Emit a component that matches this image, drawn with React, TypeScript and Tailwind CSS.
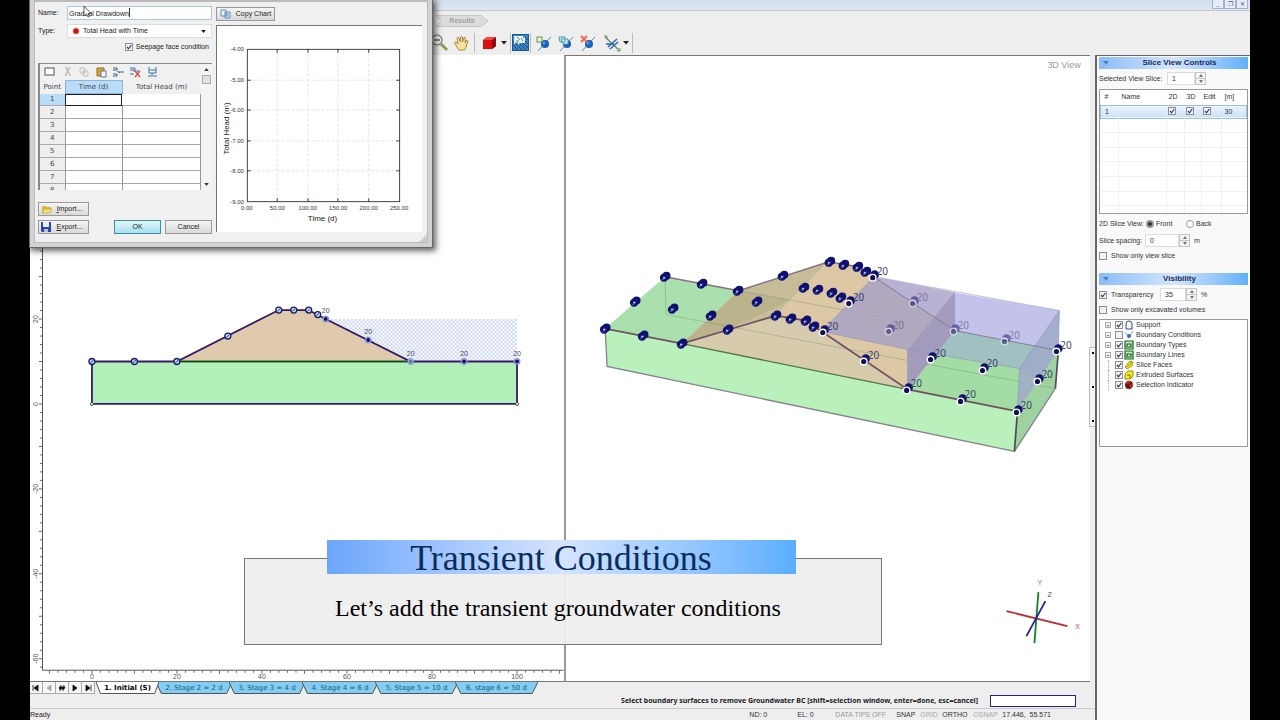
import type { ReactNode } from 'react';

const App = () => {
  return (
    <div className="h-screen bg-black px-[30px] font-['Liberation_Sans',Arial,sans-serif] text-[7px] leading-[10px] text-[#222] overflow-hidden">
      <div className="relative flex h-full flex-col bg-[#eeeeee]">
        <TitleBar />
        <WorkflowBar />
        <Toolbar />
        <div className="flex min-h-0 flex-1">
          <main className="relative flex min-w-0 flex-1 flex-col">
            <div className="flex min-h-0 flex-1">
              <section aria-label="2D view" className="min-w-0 flex-[534] border-b border-[#777] bg-white">
                <SectionView />
              </section>
              <section aria-label="3D view" className="mr-[5px] min-w-0 flex-[525] border-y border-l-2 border-[#777] border-l-[#999] bg-white">
                <ModelView />
              </section>
            </div>
            <StageTabs />
            <CommandLine />
            <StatusBar />
            <Banner />
            <div className="absolute right-0 top-[292px] flex h-20 w-[6px] flex-col items-center justify-between border border-r-0 border-[#bbb] bg-[#f4f4f4] py-1">
              <i className="size-[2px] bg-black" />
              <i className="size-[2px] bg-black" />
              <i className="size-[2px] bg-black" />
            </div>
          </main>
          <SidePanel />
        </div>
        <BoundaryDialog />
      </div>
    </div>
  );
};

const TitleBar = () => (
  <header className="flex h-[11px] shrink-0 justify-end border-b border-[#c2c8d0] bg-gradient-to-b from-[#d3dfee] to-[#dfe6f0] pr-[2px]">
    {['_', '❐', '✕'].map((glyph) => (
      <button key={glyph} className="flex h-[9px] w-3 items-center justify-center border border-t-0 border-[#9fb4cc] bg-[#e4edf7] text-[6px] leading-none text-[#556]">
        {glyph}
      </button>
    ))}
  </header>
);

const WorkflowBar = () => (
  <nav className="flex h-5 shrink-0 items-center pl-[405px]">
    <button className="relative h-3 w-[54px]">
      <svg viewBox="0 0 54 12" className="absolute inset-0">
        <path d="M1 .5H46L53 6L46 11.5H1L6 6Z" fill="#dcdcdc" stroke="#c6c6c6" />
      </svg>
      <span className="relative font-bold text-[#a2a2a2]">Results</span>
    </button>
  </nav>
);

const Separator = () => <i className="h-5 w-px shrink-0 bg-[#bbb]" />;

const Toolbar = () => (
  <div className="flex h-6 shrink-0 items-center pb-px pl-[401px]">
    <button aria-label="Zoom out" className="mr-1 size-[18px]">
      <svg viewBox="0 0 18 18">
        <path d="M10 10L16 16" stroke="#8d9c55" strokeWidth="3" />
        <circle cx="6" cy="6" r="5" fill="#eef2ee" stroke="#888" strokeWidth="1.5" />
        <path d="M3 6h6" stroke="#666" strokeWidth="1.5" />
      </svg>
    </button>
    <button aria-label="Pan" className="mr-[3px] size-[18px]">
      <svg viewBox="0 0 18 18">
        <path d="M5 15L2 9.5Q1 7.500 3 8L5 10L4 4Q4.500 2.500 6 4L7.500 8V3Q8.500 1.500 9.500 3V8L11 3.500Q12.500 3 12.500 5L12 9L13.500 6.500Q15 6 14.700 8L13 13L11.500 16H6Z" fill="#f8dfa0" stroke="#a98a45" />
      </svg>
    </button>
    <Separator />
    <button aria-label="View solid" className="ml-[5px] mr-[3px] size-[18px]">
      <svg viewBox="0 0 18 18">
        <path d="M3 6L7 3H16V12L12 15H3Z" fill="#d80f12" />
        <path d="M3 6L7 3H16L12 6Z" fill="#f0494a" />
        <path d="M12 6L16 3V12L12 15Z" fill="#960809" />
      </svg>
    </button>
    <DropArrow />
    <i className="w-[3px]" />
    <Separator />
    <button aria-label="Show groundwater" className="mx-px size-[17px] border border-[#1c568f] bg-[#3b83c4]">
      <svg viewBox="0 0 15 15">
        <path d="M0 10l5 5M0 6l9 9M4 6l9 9M8 6l7 7M10 4l5 5M12 2l3 3" stroke="#164d87" />
        <path d="M1 1h9v2l2-1v6H7L5 10V7L1 9Z" fill="#e2f0f3" />
        <path d="M4 2l3 3M8 3l2 3M3 6h3" stroke="#498" />
      </svg>
    </button>
    <Separator />
    <button aria-label="Add boundary condition" className="ml-1 size-[18px]">
      <SurfaceIcon><rect x="2" y="3" width="5" height="5" fill="#eef7dc" stroke="#68913d" /></SurfaceIcon>
    </button>
    <button aria-label="Edit boundary condition" className="ml-1 size-[18px]">
      <SurfaceIcon><path d="M2 3h6v5H3zM4 5h7v5H6z" fill="#d8f1f2" stroke="#4c9aa5" /></SurfaceIcon>
    </button>
    <button aria-label="Remove boundary condition" className="ml-1 size-[18px]">
      <SurfaceIcon><path d="M2 2l6 6M8 2L2 8" stroke="#ee6b50" strokeWidth="2" /></SurfaceIcon>
    </button>
    <button aria-label="Discharge section" className="ml-[6px] mr-[2px] size-[18px]">
      <svg viewBox="0 0 18 18">
        <path d="M2 3L16 16" stroke="#688c6c" strokeWidth="1.500" />
        <path d="M5 13L14 5M7 15L15 8M3 10l8 0" stroke="#2a67ad" strokeWidth="1.500" />
        <path d="M1 2h3v3M14 17h3v-3" fill="none" stroke="#649b45" />
      </svg>
    </button>
    <DropArrow />
    <i className="w-[3px]" />
    <Separator />
  </div>
);

const SurfaceIcon = ({ children }: { children: ReactNode }) => (
  <svg viewBox="0 0 18 18">
    <path d="M3 17L16 3" stroke="#6d87a0" />
    <circle cx="10" cy="10" r="4" fill="#1861bd" />
    <circle cx="9" cy="9" r="1.500" fill="#5d9ce2" />
    {children}
  </svg>
);

const DropArrow = () => (
  <svg viewBox="0 0 6 4" className="h-1 w-[6px] shrink-0">
    <path d="M0 0h6L3 3.500Z" fill="#222" />
  </svg>
);

// 2D section. Model units: x = 92 + 4.255 u, y = 404 - 4.25 u
const SectionView = () => (
  <svg viewBox="30 55 534 626" className="block size-full">
    <defs>
      <pattern id="water" width="4" height="4" patternUnits="userSpaceOnUse">
        <path d="M0 0L4 4M4 0L0 4" stroke="#b3c3f3" strokeWidth=".7" />
      </pattern>
    </defs>
    <path d="M42.500 55V670.500H564" fill="none" stroke="#555" />
    {Array.from({ length: 75 }, (_, i) => 654.700 - (i - 1) * 8.5 + 4.3).map((y, i) => (
      <path key={y} d={`M${i % 5 === 1 ? 39 : 40} ${y}H42`} stroke="#666" />
    ))}
    {Array.from({ length: 61 }, (_, i) => 49.450 + i * 8.51).map((x, i) => (
      <path key={x} d={`M${x} 671V${i % 5 === 0 ? 674 : 673}`} stroke="#666" />
    ))}
    <g fontSize="7" fill="#555" textAnchor="middle">
      {xLabels.map((u) => (
        <text key={u} x={92 + u * 4.255} y="679">{u}</text>
      ))}
      {yLabels.map((u) => (
        <text key={u} transform={`translate(38 ${404 - u * 4.25}) rotate(-90)`}>{u}</text>
      ))}
    </g>
    <path d="M326 319H517.500V361H411Z" fill="url(#water)" />
    <path d="M92 361.500H517.500V404H92Z" fill="#b3efb8" />
    <path d="M177 361.500L279 310H309L318 315L411 361.500Z" fill="#dfcaad" />
    <path d="M177 361.500H411" stroke="#0f5a16" strokeWidth="1.500" />
    <path d="M92 361.500H177L279 310H309L318 315L411 361.500H517.500V404H92Z" fill="none" stroke="#361a68" strokeWidth="1.800" />
    <path d="M177 361.500H411" stroke="#0f4a16" strokeWidth="1.500" />
    {sectionNodes.map(([x, y]) => (
      <g key={x}>
        <circle cx={x} cy={y} r="3" fill="#c6d4f5" stroke="#151d6d" strokeWidth="1.300" />
        <path d={`M${x - 1.500} ${y + 1.500}L${x + 1.500} ${y - 1.500}`} stroke="#2c3670" />
      </g>
    ))}
    {sectionHeads.map(([x, y]) => (
      <g key={x}>
        <circle cx={x} cy={y} r="3" fill="#c9d2ff" stroke="#7883d6" />
        <circle cx={x} cy={y} r="2" fill={x === 411 ? '#4d8580' : '#0d0f66'} />
        <text x={x} y={y - 6} fontSize="7" fill="#444a66" textAnchor="middle">20</text>
      </g>
    ))}
    <circle cx="92" cy="404" r="1.500" fill="#fff" stroke="#444" />
    <circle cx="517.500" cy="404" r="1.500" fill="#fff" stroke="#444" />
  </svg>
);

const ModelView = () => (
  <svg viewBox="567 55 523 626" className="block size-full">
    {/* foundation block */}
    <path d="M605 328L665 276L739 290L682 343Z" fill="#a9e0ae" />
    <path d="M908 389L955 330L1059 350L1018 411Z" fill="#a3dca4" />
    <path d="M1018 411L1059 350L1056 388L1015 451Z" fill="#9ed2a1" />
    <path d="M605 328L682 343L908 389L1018 411L1015 451L607 366Z" fill="#b9f0bc" />
    {/* embankment */}
    <path d="M682 343L739 290L829 261L776 315Z" fill="#c7bc98" />
    <path d="M682 343L739 290L790 300L728 329Z" fill="#b0ad84" opacity=".6" />
    <path d="M776 315L829 261L858 266L874 276L955 330L908 389L822 331L806 320Z" fill="#dcc8a5" />
    <path d="M682 343L776 315L806 320L822 331L908 389Z" fill="#d7cbae" />
    <path d="M665 276L666 314L1056 388M739 290L955 330" fill="none" stroke="#607860" opacity=".3" />
    {/* ponded water */}
    <path d="M822 331L874 276L955 292L908 349Z" fill="#aaa3c1" opacity=".88" />
    <path d="M874 276L955 292V330Z" fill="#bab2d2" />
    <path d="M955 292L1060 310L1059 350L955 330Z" fill="#c3c2ea" />
    <path d="M955 330L1059 350L1041 376L1020 368L925 352Z" fill="#a0c0c2" />
    <path d="M955 292V330L908 389V349Z" fill="#a29bbb" />
    <path d="M1060 310L1059 350L1018 411L1020 368Z" fill="#9fa9c9" opacity=".85" />
    <path d="M822 331L874 276L1060 310L1020 368L908 349ZM955 292V330M908 349V389M1020 368L1018 411M1060 310L1059 350" fill="none" stroke="#9290bd" opacity=".6" />
    {/* outlines */}
    <path d="M665 276L739 290L829 261L858 266L874 276" fill="none" stroke="#86717f" strokeWidth="1.500" />
    <path d="M874 276L955 330L1059 350" fill="none" stroke="#827c98" />
    <path d="M682 343L908 389" stroke="#55754b" strokeWidth="1.300" />
    <path d="M605 328L682 343L776 315L806 320L822 331L908 389L1018 411" fill="none" stroke="#705460" strokeWidth="1.800" />
    <path d="M605 328L607 366L1015 451M1015 451L1056 388" fill="none" stroke="#84848a" strokeWidth="1.300" />
    <path d="M1018 411L1015 451M1059 350L1056 388" stroke="#4e4c60" strokeWidth="1.700" />
    {modelNodes.map(([x, y]) => (
      <g key={`${x}-${y}`} fill="#101070">
        <circle cx={x + 1.500} cy={y - 1} r="4" />
        <circle cx={x - 1} cy={y + 1} r="4.200" />
        <path d={`M${x - 3} ${y + 3}Q${x} ${y + 3} ${x + 1} ${y}`} fill="none" stroke="#5563b8" />
        <circle cx={x - 1} cy={y + 1} r="1" fill="#c5cef5" />
      </g>
    ))}
    {modelHeads.map(([x, y, veiled]) => (
      <g key={`${x}-${y}`} opacity={veiled ? 0.5 : 1}>
        <circle cx={x + 1} cy={y - 2} r="4.300" fill="#101070" />
        <circle cx={x - 1} cy={y + 1} r="3.300" fill="#101058" stroke="#fff" strokeWidth="1.400" />
        <text x={x + 3} y={y - 2} fontSize="10" fill="#3c3f70" className="font-['Noto_Sans',sans-serif]">20</text>
      </g>
    ))}
    <text x="1048" y="67" fontSize="9" fill="#999">3D View</text>
    {/* axis triad */}
    <g strokeWidth="1.800">
      <path d="M1007 611L1068 626" stroke="#c22a35" />
      <path d="M1039 592L1035 643" stroke="#118322" />
      <path d="M1046 601L1027 636" stroke="#242099" />
    </g>
    <text x="1038" y="585" fontSize="7" fill="#777">Y</text>
    <text x="1048" y="597" fontSize="7" fill="#4e45ad">Z</text>
    <text x="1076" y="629" fontSize="7" fill="#cf4660">X</text>
  </svg>
);

const StageTabs = () => (
  <div className="flex h-3 shrink-0 font-['DejaVu_Sans',sans-serif]">
    <div className="flex">
      {navButtons.map(({ label, path }) => (
        <button key={label} aria-label={label} className="flex w-[13px] items-center justify-center border-b border-r border-[#aaa] bg-[#f6f6f6]">
          <svg viewBox="0 0 8 8" className="size-2">
            <path d={path} fill={label === 'Previous' ? '#aaa' : '#111'} stroke={label === 'Previous' ? '#aaa' : '#111'} strokeWidth=".8" />
          </svg>
        </button>
      ))}
    </div>
    <div role="tablist" className="ml-px flex">
      {stages.map(({ name, width }, index) => (
        <button key={name} role="tab" aria-selected={index === 0} className={`relative -mr-[3px] flex items-center justify-center whitespace-nowrap ${width} ${index === 0 ? 'z-10 font-bold text-black' : 'text-[#155a80]'}`}>
          <svg viewBox="0 0 100 12" preserveAspectRatio="none" className="absolute inset-0 size-full">
            <path d="M0 0L7 11.500H93L100 0" fill={index === 0 ? '#fff' : '#83cdf2'} stroke="#555" vectorEffect="non-scaling-stroke" />
          </svg>
          <span className="relative">{name}</span>
        </button>
      ))}
    </div>
  </div>
);

const CommandLine = () => (
  <div className="flex h-[15px] shrink-0 items-center justify-end gap-3 border-b border-[#ccc] pr-[19px]">
    <label htmlFor="command" className="font-['Noto_Sans',sans-serif] font-bold text-[#222]">
      Select boundary surfaces to remove Groundwater BC [shift=selection window, enter=done, esc=cancel]
    </label>
    <input id="command" className="h-3 w-[86px] border border-[#2a2080] bg-white" />
  </div>
);

const StatusBar = () => (
  <footer className="flex h-[11px] shrink-0 items-end justify-between pr-11">
    <span>Ready</span>
    <div className="flex text-[#333]">
      <span className="w-12">ND: 0</span>
      <span className="w-[38px]">EL: 0</span>
      <span className="w-[61px] text-[#999]">DATA TIPS OFF</span>
      <span className="w-6">SNAP</span>
      <span className="w-[22px] text-[#aaa]">GRID</span>
      <span className="w-[31px]">ORTHO</span>
      <span className="w-[29px] text-[#aaa]">OSNAP</span>
      <span className="whitespace-pre">17.446,  55.571</span>
    </div>
  </footer>
);

const Banner = () => (
  <div className="absolute bottom-[75px] left-1/2 w-[638px] -translate-x-1/2 font-['Liberation_Serif',serif]">
    <div className="mt-[18px] flex h-[87px] items-end justify-center border border-[#777] bg-[#eeeeee]/95 pb-5">
      <p className="pr-[9px] text-2xl leading-8 text-black">Let’s add the transient groundwater conditions</p>
    </div>
    <h1 className="absolute left-[83px] top-0 h-[34px] w-[469px] bg-gradient-to-r from-[#6ba6fa] via-[#d5e4ff] to-[#5aaefc] text-center text-4xl leading-9 text-[#0b2d5c]">
      Transient Conditions
    </h1>
  </div>
);

type CheckProps = { id: string; checked?: boolean; label?: string };

const Check = ({ id, checked, label }: CheckProps) => (
  <span className="relative inline-flex size-2 shrink-0">
    <input id={id} type="checkbox" defaultChecked={checked} aria-label={label} className="peer size-2 appearance-none border border-[#8b8f96] bg-[#f1f2f4]" />
    <svg viewBox="0 0 8 8" className="pointer-events-none absolute inset-0 hidden peer-checked:block">
      <path d="M2 4L3.500 5.800L6.300 2" fill="none" stroke="#363c55" strokeWidth="1.200" />
    </svg>
  </span>
);

const Stepper = () => (
  <span className="flex h-[13px] w-[11px] shrink-0 flex-col border border-[#c5c5c5] bg-[#f3f3f3]">
    <button aria-label="Increase" className="flex flex-1 items-center justify-center border-b border-[#c5c5c5]">
      <svg viewBox="0 0 4 3" className="h-[3px] w-1"><path d="M0 3L2 0L4 3Z" fill="#777" /></svg>
    </button>
    <button aria-label="Decrease" className="flex flex-1 items-center justify-center">
      <svg viewBox="0 0 4 3" className="h-[3px] w-1"><path d="M0 0L2 3L4 0Z" fill="#777" /></svg>
    </button>
  </span>
);

const PanelHeader = ({ title }: { title: string }) => (
  <h2 className="relative h-3 bg-gradient-to-r from-[#8bbcf8] via-[#d4e5fd] to-[#5fb0f8] text-center text-[8px] font-bold leading-3 text-[#152a55]">
    <svg viewBox="0 0 6 4" className="absolute left-1 top-1 h-1 w-[6px]"><path d="M0 0h6L3 4Z" fill="#4784bd" /></svg>
    <span className="pl-3">{title}</span>
  </h2>
);

const radio = 'size-2 appearance-none rounded-full border border-[#999] bg-white checked:border-2 checked:bg-[#333]';

const SidePanel = () => (
  <aside className="w-[155px] shrink-0 border-l-2 border-t border-[#666] bg-[#f9f9f9] px-[2px] pt-px text-[#333]">
    <PanelHeader title="Slice View Controls" />
    <div className="mt-[3px] flex h-[13px] items-center">
      <label htmlFor="slice" className="w-[68px]">Selected View Slice:</label>
      <input id="slice" defaultValue="1" className="h-[13px] w-7 border border-[#ddd] bg-white px-1" />
      <Stepper />
    </div>
    <div className="mt-1 h-[125px] border border-[#999] bg-white">
      <table className="h-full w-full table-fixed border-collapse text-left">
        <thead>
          <tr className="h-[15px]">
            <th className="w-[18px] pl-1 font-normal">#</th>
            <th className="w-12 pl-[3px] font-normal">Name</th>
            <th className="w-[18px] pl-[2px] font-normal">2D</th>
            <th className="w-[17px] pl-[2px] font-normal">3D</th>
            <th className="w-5 pl-[2px] font-normal">Edit</th>
            <th className="pl-[3px] font-normal">[m]</th>
          </tr>
        </thead>
        <tbody>
          <tr className="h-[13px] border border-[#9fbfe0] bg-gradient-to-b from-[#e8f3fd] to-[#cfe2f6]">
            <td className="pl-1">1</td>
            <td />
            <td className="pl-px leading-none"><Check id="row2d" label="2D" checked /></td>
            <td className="pl-px leading-none"><Check id="row3d" label="3D" checked /></td>
            <td className="pl-px leading-none"><Check id="rowedit" label="Edit" checked /></td>
            <td className="pl-[3px]">30</td>
          </tr>
          {[1, 2, 3, 4, 5, 6, 7].map((row) => (
            <tr key={row} className="border-b border-[#f0f0f0] last:border-b-0">
              <td className="border-r border-[#f0f0f0]" />
              <td className="border-r border-[#f0f0f0]" />
              <td className="border-r border-[#f0f0f0]" />
              <td className="border-r border-[#f0f0f0]" />
              <td className="border-r border-[#f0f0f0]" />
              <td />
            </tr>
          ))}
        </tbody>
      </table>
    </div>
    <div role="radiogroup" aria-labelledby="side-label" className="mt-[5px] flex items-center">
      <span id="side-label" className="w-[47px] whitespace-nowrap">2D Slice View:</span>
      <label className="flex w-10 items-center gap-[2px]">
        <input type="radio" name="side" defaultChecked className={radio} />Front
      </label>
      <label className="flex items-center gap-[2px]">
        <input type="radio" name="side" className={radio} />Back
      </label>
    </div>
    <div className="mt-[5px] flex h-[13px] items-center">
      <label htmlFor="spacing" className="w-[46px]">Slice spacing:</label>
      <input id="spacing" defaultValue="0" className="h-[13px] w-[34px] border border-[#ddd] bg-white px-1" />
      <Stepper />
      <span className="ml-1">m</span>
    </div>
    <div className="mt-1 flex items-center gap-1">
      <Check id="onlyslice" /><label htmlFor="onlyslice">Show only view slice</label>
    </div>
    <div className="mt-3">
      <PanelHeader title="Visibility" />
    </div>
    <div className="mt-[3px] flex h-[13px] items-center">
      <Check id="transparency" checked />
      <label htmlFor="transparency" className="ml-1 w-[49px]">Transparency</label>
      <input aria-label="Transparency percent" defaultValue="35" className="h-[13px] w-[26px] border border-[#ddd] bg-white px-1" />
      <Stepper />
      <span className="ml-1">%</span>
    </div>
    <div className="mt-1 flex items-center gap-1">
      <Check id="excavated" /><label htmlFor="excavated">Show only excavated volumes</label>
    </div>
    <ul className="mt-1 h-[128px] border border-[#999] bg-white pl-[5px]">
      {layers.map(({ name, expandable, checked, icon }) => (
        <li key={name} className="flex h-[10px] items-center">
          <span className="flex w-[10px] items-center">
            {expandable ? (
              <button aria-label={`Expand ${name}`} className="flex size-[6px] items-center justify-center border border-[#aaa] text-[6px] leading-none text-[#555]">+</button>
            ) : (
              <i className="ml-[3px] h-[10px] w-[5px] border-l border-dotted border-[#aaa]" />
            )}
          </span>
          <Check id={name} checked={checked} />
          <svg viewBox="0 0 10 10" className="ml-px size-[10px]">{icon}</svg>
          <label htmlFor={name} className="ml-[2px]">{name}</label>
        </li>
      ))}
    </ul>
  </aside>
);

const dialogButton = 'flex h-[14px] items-center justify-center border border-[#999] bg-gradient-to-b from-[#f5f5f5] to-[#d9d9d9] text-[#222]';

const BoundaryDialog = () => (
  <div role="dialog" aria-label="Groundwater boundary condition" className="absolute left-0 top-0 w-[402px] border-x-[4px] border-b-[4px] border-[#d2d2d2] bg-[#f0f0f0] shadow-[2px_2px_6px_2px_#0009] outline outline-1 outline-[#666]">
    <div className="flex border border-t-2 border-[#bbb] pb-2 pl-[3px] pr-[5px] pt-1">
      <div className="w-[174px] shrink-0">
        <div className="flex h-[14px] items-center">
          <label htmlFor="name" className="w-[29px]">Name:</label>
          <input id="name" defaultValue="Gradual Drawdown" className="h-[14px] min-w-0 flex-1 border border-[#a8c8e4] bg-white px-px" />
        </div>
        <div className="relative mt-1 flex h-[14px] items-center">
          <label htmlFor="type" className="w-[29px]">Type:</label>
          <select id="type" className="h-[14px] min-w-0 flex-1 appearance-none border border-[#ddd] bg-white pl-[15px]">
            <option>Total Head with Time</option>
          </select>
          <svg viewBox="0 0 8 8" className="absolute left-[34px] size-2"><circle cx="4" cy="4" r="3.500" fill="#eba0a0" /><circle cx="4" cy="4" r="2.600" fill="#c81414" /></svg>
          <svg viewBox="0 0 6 4" className="absolute right-[6px] h-[3px] w-[5px]"><path d="M0 0h6L3 4Z" fill="#111" /></svg>
        </div>
        <div className="mt-1 flex items-center justify-end gap-[3px] pr-[3px]">
          <Check id="seepage" checked /><label htmlFor="seepage">Seepage face condition</label>
        </div>
        <div className="mt-[11px] h-[127px] overflow-hidden border-l-2 border-t border-[#888]">
          <div className="flex">
            <div className="w-[161px] shrink-0">
              <div className="flex h-4 items-center pl-1">
                {tableTools.map(({ label, icon }) => (
                  <button key={label} aria-label={label} className="mr-[5px] size-3">
                    <svg viewBox="0 0 12 12" fill="none">{icon}</svg>
                  </button>
                ))}
              </div>
              <table className="h-[117px] w-full table-fixed border-collapse font-['DejaVu_Sans',sans-serif] text-[#444]">
                <thead>
                  <tr className="h-[13px]">
                    <th className="w-[25px] font-normal">Point</th>
                    <th className="w-[57px] border border-[#8fb5d5] bg-[#b9dcf8] font-normal">Time (d)</th>
                    <th className="font-normal">Total Head (m)</th>
                  </tr>
                </thead>
                <tbody>
                  {[1, 2, 3, 4, 5, 6, 7, 8].map((row) => (
                    <tr key={row} className="border-b border-[#aaa]">
                      <th className={`border-r border-[#999] p-0 font-normal ${row === 1 ? 'bg-[#b9dcf8]' : 'bg-[#eeeeee]'}`}>{row}</th>
                      <td className={`bg-white ${row === 1 ? 'outline outline-1 -outline-offset-1 outline-[#152038]' : 'border-r border-[#999]'}`} />
                      <td className="border-r border-[#999] bg-white" />
                    </tr>
                  ))}
                </tbody>
              </table>
            </div>
            <div className="flex h-[126px] flex-1 flex-col items-center bg-[#f4f4f4] pb-1 pt-1">
              <svg viewBox="0 0 6 4" className="h-[3px] w-[5px]"><path d="M0 4h6L3 0Z" fill="#333" /></svg>
              <i className="mt-1 h-[9px] w-[9px] border border-[#aaa] bg-[#e2e2e2]" />
              <svg viewBox="0 0 6 4" className="mt-auto h-[3px] w-[5px]"><path d="M0 0h6L3 4Z" fill="#333" /></svg>
            </div>
          </div>
        </div>
        <button className={`mt-3 w-[51px] gap-1 pr-1 ${dialogButton}`}>
          <svg viewBox="0 0 12 10" className="h-[10px] w-3"><path d="M1 9V2h4l1 1h4v6Z" fill="#dbb83e" /><path d="M1 9L3 5h8L9 9Z" fill="#f7e17d" stroke="#9f882e" strokeWidth=".5" /></svg>
          <span><u>I</u>mport...</span>
        </button>
        <div className="mt-1 flex justify-between">
          <button className={`w-[51px] gap-1 pr-1 ${dialogButton}`}>
            <svg viewBox="0 0 12 10" className="h-[10px] w-3"><path d="M1 0h10v10H2L1 9Z" fill="#31459f" /><path d="M3 0h6v5H3Z" fill="#e7ecfa" /><path d="M4 7h4v3H4Z" fill="#b6c1df" /></svg>
            <span><u>E</u>xport...</span>
          </button>
          <div className="flex gap-1">
            <button className="h-[14px] w-[47px] border border-[#3b8fa8] bg-gradient-to-b from-[#e3f7fc] to-[#a6e0ee]">OK</button>
            <button className={`w-[47px] ${dialogButton}`}>Cancel</button>
          </div>
        </div>
      </div>
      <div className="ml-1 min-w-0 flex-1">
        <button className={`mt-px w-[59px] gap-1 ${dialogButton}`}>
          <svg viewBox="0 0 12 10" className="h-[10px] w-3"><path d="M1 1h5v6H1ZM5 3h5v6H5Z" fill="#edf4fc" stroke="#5f89b8" /><path d="M6 5h3M6 7h3" stroke="#356fb0" strokeWidth=".8" /></svg>
          <span className="whitespace-nowrap">Copy Chart</span>
        </button>
        <div className="mt-1 border-l border-t border-[#777] bg-white">
          <HeadChart />
        </div>
      </div>
    </div>
    <svg viewBox="0 0 8 8" className="absolute bottom-px right-px size-2"><path d="M8 0V8H0Z" fill="#ccc" /></svg>
    {/* text caret and mouse pointer */}
    <i className="absolute left-[95px] top-2 h-[9px] w-px bg-[#333]" />
    <svg viewBox="0 0 9 13" className="absolute left-[49px] top-[5px] h-[13px] w-[9px]"><path d="M1 1V11L3.500 9L5 12L6.500 11.500L5 8.500H8Z" fill="#fff" stroke="#333" strokeWidth=".8" /></svg>
  </div>
);

const HeadChart = () => (
  <svg viewBox="217 25 206 207" className="block w-full">
    <path d="M277.500 48V202M308.500 48V202M338.500 48V202M369.500 48V202M247 79.500H400M247 109.500H400M247 140.500H400M247 170.500H400" stroke="#e4e4e4" strokeDasharray="3 2" />
    <rect x="247.500" y="48.500" width="153" height="153" fill="none" stroke="#444" />
    <path d="M277.500 48v4M308.500 48v4M338.500 48v4M369.500 48v4M277.500 202v-4M308.500 202v-4M338.500 202v-4M369.500 202v-4M247 79.500h4M247 109.500h4M247 140.500h4M247 170.500h4M401 79.500h-4M401 109.500h-4M401 140.500h-4M401 170.500h-4" stroke="#444" />
    <g fontSize="6" fill="#333" textAnchor="end">
      {['-4.00', '-5.00', '-6.00', '-7.00', '-8.00', '-9.00'].map((label, i) => (
        <text key={label} x="244" y={50.5 + i * 30.6}>{label}</text>
      ))}
    </g>
    <g fontSize="6" fill="#333" textAnchor="middle">
      {['0.00', '50.00', '100.00', '150.00', '200.00', '250.00'].map((label, i) => (
        <text key={label} x={247 + i * 30.6} y="210">{label}</text>
      ))}
    </g>
    <text x="323" y="221" fontSize="8" fill="#222" textAnchor="middle">Time (d)</text>
    <text transform="translate(229 128) rotate(-90)" fontSize="8" fill="#222" textAnchor="middle">Total Head (m)</text>
  </svg>
);

const xLabels = [0, 20, 40, 60, 80, 100];
const yLabels = [20, 0, -20, -40, -60];

const sectionNodes = [
  [92, 361.5], [134.5, 361.5], [177, 361.5], [228, 336], [279, 310], [294, 310], [309, 310], [318, 314.5],
];

const sectionHeads = [
  [326, 319], [368.5, 340], [411, 361.5], [464.5, 361.5], [517.5, 361.5],
];

const modelNodes = [
  [605, 328], [643, 335], [682, 343], [728, 329], [776, 315], [791, 318], [806, 320], [814, 326],
  [635, 301], [673, 308], [711, 315], [757, 301], [804, 287], [818, 289], [832, 292], [841, 297],
  [665, 276], [702, 283], [738, 290], [783, 275], [830, 261], [844, 264], [858, 266], [866, 271],
];

const modelHeads: [number, number, boolean][] = [
  [874, 276, false], [850, 302, false], [824, 331, false], [865, 360, false], [908, 389, false],
  [962, 400, false], [1018, 411, false], [1039, 380, false], [1058, 350, false],
  [932, 358, false], [984, 369, false],
  [914, 302, true], [890, 330, true], [955, 330, true], [1006, 340, true],
];

const navButtons = [
  { label: 'First', path: 'M1 1V7M6 1V7L2 4Z' },
  { label: 'Previous', path: 'M6 1V7L2 4Z' },
  { label: 'Pick stage', path: 'M1 3H7L6 5H1M3 1L2 7M6 1L5 7' },
  { label: 'Next', path: 'M2 1V7L6 4Z' },
  { label: 'Last', path: 'M2 1V7L6 4ZM7 1V7' },
];

const stages = [
  { name: '1. Initial (S)', width: 'w-[63px]' },
  { name: '2. Stage 2 = 2 d', width: 'w-[76px]' },
  { name: '3. Stage 3 = 4 d', width: 'w-[76px]' },
  { name: '4. Stage 4 = 6 d', width: 'w-[76px]' },
  { name: '5. Stage 5 = 10 d', width: 'w-[83px]' },
  { name: '6. stage 6 = 50 d', width: 'w-[83px]' },
];

const greenLayer = <path d="M1 1h8v8H1ZM3 4h4v3H3Z" fill="#c6eac2" stroke="#12651c" strokeWidth="1.200" />;

const layers = [
  { name: 'Support', expandable: true, checked: true, icon: <path d="M2 9V4Q2 1 5 1T8 4V9Z" fill="#f5f7ff" stroke="#39468c" /> },
  { name: 'Boundary Conditions', expandable: true, checked: false, icon: <><path d="M1 2L5 7L9 1" fill="none" stroke="#82a3e8" /><circle cx="5" cy="6" r="2" fill="#3563c8" /></> },
  { name: 'Boundary Types', expandable: true, checked: true, icon: greenLayer },
  { name: 'Boundary Lines', expandable: true, checked: true, icon: greenLayer },
  { name: 'Slice Faces', expandable: false, checked: true, icon: <path d="M1 7L6 1L9 2L8 6L3 9ZM3 7L8 2" fill="#e9e31b" stroke="#8a8518" strokeWidth=".8" /> },
  { name: 'Extruded Surfaces', expandable: false, checked: true, icon: <><path d="M1 4L4 1H9V6L6 9H1Z" fill="#f8ee12" stroke="#746e0c" strokeWidth=".8" /><path d="M3 5h3v3" fill="none" stroke="#746e0c" /></> },
  { name: 'Selection Indicator', expandable: false, checked: true, icon: <><circle cx="5" cy="5" r="4.200" fill="#b52824" /><path d="M2 8L8 2M2 4l4 4" stroke="#3e1515" strokeWidth="1.200" /></> },
];

const tableTools = [
  { label: 'Select', icon: <rect x="1" y="2" width="9" height="7" fill="#fff" stroke="#555" /> },
  { label: 'Cut', icon: <path d="M5 1L8 8M9 1L5 8M4 9h2M8 9h2" stroke="#bbb" strokeWidth="1.500" /> },
  { label: 'Copy', icon: <path d="M2 2h5v5H2ZM5 5h5v5H5Z" fill="#eee" stroke="#c0c0c0" /> },
  { label: 'Paste', icon: <><path d="M2 2h7v8H2Z" fill="#d4a739" stroke="#91701d" /><path d="M6 5h5v6H6Z" fill="#f5f5ff" stroke="#66759b" /></> },
  { label: 'Insert row', icon: <path d="M1 2h4v2H1M1 8h4v2H1M5 5l3 2M7 6h5" stroke="#446180" /> },
  { label: 'Delete row', icon: <><path d="M1 2h5v2H1M1 8h4M4 5h6" stroke="#446eb0" /><path d="M6 5l5 6M11 5L6 11" stroke="#dc4838" strokeWidth="1.200" /></> },
  { label: 'Append rows', icon: <path d="M3 1v6h7V1M3 4h7M6 7v2M2 10h9" stroke="#3c76aa" /> },
];

export default App;
